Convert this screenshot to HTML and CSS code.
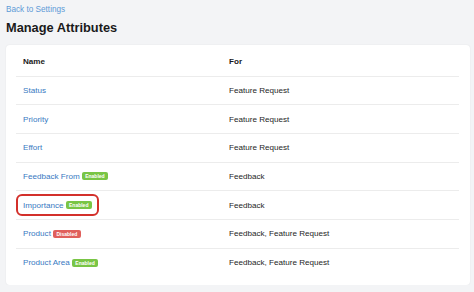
FILE: index.html
```html
<!doctype html>
<html>
	<head>
		<title>Manage Attributes</title>
		<meta charset="utf8">
		<link rel="stylesheet" href="styles.css">
	</head>
	<body>
		<a href="#settings" class="back">Back to Settings</a>
		<h1>Manage Attributes</h1>
		<div class="card">
			<div class="row head">
				<span class="name">Name</span>
				<span class="for">For</span>
			</div>
			<div class="row">
				<span class="name"><a href="#status">Status</a></span>
				<span class="for">Feature Request</span>
			</div>
			<div class="row">
				<span class="name"><a href="#priority">Priority</a></span>
				<span class="for">Feature Request</span>
			</div>
			<div class="row">
				<span class="name"><a href="#effort">Effort</a></span>
				<span class="for">Feature Request</span>
			</div>
			<div class="row">
				<span class="name"><a href="#feedback-from">Feedback From</a><span class="badge on">Enabled</span></span>
				<span class="for">Feedback</span>
			</div>
			<div class="row">
				<span class="name"><span class="flagged"><a href="#importance">Importance</a><span class="badge on">Enabled</span></span></span>
				<span class="for">Feedback</span>
			</div>
			<div class="row">
				<span class="name"><a href="#product">Product</a><span class="badge off">Disabled</span></span>
				<span class="for">Feedback, Feature Request</span>
			</div>
			<div class="row">
				<span class="name"><a href="#product-area">Product Area</a><span class="badge on">Enabled</span></span>
				<span class="for">Feedback, Feature Request</span>
			</div>
		</div>
	</body>
</html>
```

FILE: styles.css
```css
* {
	margin: 0;
	padding: 0;
	box-sizing: border-box;
}
html,body {
	background-color: #f3f4f6;
	font-family: "Liberation Sans", Arial, sans-serif;
	color: #262626;
}
body {
	padding: 4px 4px 0 6px;
}
a {
	text-decoration: none;
	color: #3879c2;
}
.back {
	display: block;
	font-size: 8.2px;
	line-height: 12px;
	color: #5d9ad6;
}
h1 {
	font-size: 12.8px;
	line-height: 16px;
	margin-top: 4px;
	color: #1a1a1a;
}
.card {
	margin-top: 9px;
	background: #fff;
	border-radius: 4px;
	padding: 3px 11px 8px 10px;
	box-shadow: 0 0 2px rgba(0, 0, 0, 0.07);
}
.row {
	display: flex;
	align-items: center;
	height: 28.67px;
	font-size: 8.1px;
	border-bottom: 1px solid #ececec;
}
.row:last-child {
	border-bottom: 0;
}
.head {
	font-weight: bold;
	color: #1a1a1a;
}
.name {
	width: 206px;
	padding-left: 7px;
	display: flex;
	align-items: center;
}
.for {
	padding-left: 7px;
}
.badge {
	display: inline-block;
	margin-left: 2px;
	padding: 0 3.5px;
	height: 8px;
	line-height: 8px;
	font-size: 5px;
	font-weight: bold;
	color: #fff;
	border-radius: 2px;
}
.on {
	background: #79c545;
}
.off {
	background: #e0605c;
}
.flagged {
	position: relative;
	display: flex;
	align-items: center;
}
.flagged::after {
	content: "";
	position: absolute;
	left: -7px;
	right: -7px;
	top: -7px;
	bottom: -6px;
	border: 2px solid #d3302b;
	border-radius: 6px;
}
```
